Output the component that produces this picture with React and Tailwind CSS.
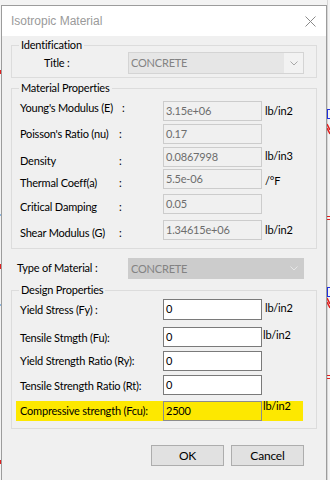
import React from 'react';

const font = "font-[family-name:Lato,'Liberation_Sans',sans-serif]";

const Chevron = ({ color }) => (
  <svg width="8" height="5" viewBox="0 0 8 5" className="block">
    <path d="M0.5 0.5 L4 4 L7.5 0.5" fill="none" stroke={color} strokeWidth="1" />
  </svg>
);

// disabled property rows of the "Material Properties" group
const materialRows = [
  { label: "Young's Modulus (E)", value: '3.15e+06', unit: 'lb/in2', row: 'mt-[6px]', lab: '-mt-[3px]', colon: 'pl-[3px]', u: '' },
  { label: "Poisson's Ratio (nu)", value: '0.17', unit: '', row: 'mt-[3px]', lab: '', colon: '', u: '' },
  { label: 'Density', value: '0.0867998', unit: 'lb/in3', row: 'mt-[3px]', lab: 'mt-[4px]', colon: '', u: '-mt-[1px]' },
  { label: 'Thermal Coeff(a)', value: '5.5e-06', unit: '/°F', row: 'mt-[2px]', lab: 'mt-[4px]', colon: '', u: 'mt-[2px]' },
  { label: 'Critical Damping', value: '0.05', unit: '', row: 'mt-[5px]', lab: 'mt-[3px]', colon: '', u: '' },
  { label: 'Shear Modulus (G)', value: '1.34615e+06', unit: 'lb/in2', row: 'mt-[6px]', lab: 'mt-[3px]', colon: '', u: '' },
];

const designRows = [
  { label: 'Yield Stress (Fy) :', value: '0', unit: 'lb/in2', row: 'mt-[2px] h-[21px]', lab: 'mt-[1px]', u: '-mt-[1px] ml-[3px]' },
  { label: 'Tensile Stmgth (Fu):', value: '0', unit: 'lb/in2', row: 'mt-[7px] h-[20px]', lab: 'mt-[1px]', u: '-mt-[2px] ml-[1px]' },
  { label: 'Yield Strength Ratio (Ry):', value: '0', unit: '', row: 'mt-[4px] h-[20px]', lab: '', u: '' },
  { label: 'Tensile Strength Ratio (Rt):', value: '0', unit: '', row: 'mt-[4px] h-[20px]', lab: 'mt-[1px]', u: '' },
];

const Legend = ({ children }) => (
  <legend className="ml-[7px] px-[2px] leading-[14px] text-black">{children}</legend>
);

export default function App() {
  return (
    <div className={`${font} flex w-[330px] h-[480px] overflow-hidden bg-[#f3f3f3] text-[11px] tracking-[-0.2px] text-black`}>
      {/* left edge of the drawing behind the dialog */}
      <svg width="1" height="480" className="block shrink-0">
        <rect x="0" y="70" width="1" height="4" fill="#e02020" />
        <rect x="0" y="264" width="1" height="5" fill="#e02020" />
        <rect x="0" y="460" width="1" height="4" fill="#e02020" />
        <rect x="0" y="214" width="1" height="2" fill="#8fb8e0" />
        <rect x="0" y="304" width="1" height="2" fill="#8fb8e0" />
      </svg>

      <div className="mt-[5px] flex h-[480px] w-[326px] shrink-0 flex-col border border-[#9c9c9c] bg-[#f0f0f0]">
        {/* title bar */}
        <div className="flex h-[30px] shrink-0 items-center justify-between bg-white pl-[9px] pr-[10px]">
          <span className="text-[12px] tracking-normal text-[#9a9a9a] font-[family-name:'Liberation_Sans',sans-serif]">Isotropic Material</span>
          <svg width="11" height="11" viewBox="0 0 11 11" className="block">
            <path d="M0.5 0.5 L10.5 10.5 M10.5 0.5 L0.5 10.5" stroke="#8a8a8a" strokeWidth="1" />
          </svg>
        </div>

        {/* Identification */}
        <fieldset className="mx-[9px] mt-[2px] border border-[#dcdcdc] pb-[3px]">
          <Legend>Identification</Legend>
          <div className="flex h-[22px] items-center">
            <span className="ml-[32px] w-[84px]">Title :</span>
            <div className="flex h-[22px] w-[176px] border border-[#d4d4d4] bg-[#e6e6e6]">
              <span className="flex-1 pl-[2px] leading-[20px] text-[#838383]">CONCRETE</span>
              <div className="flex w-[19px] items-center justify-center bg-[#f2f2f2]">
                <Chevron color="#a8a8a8" />
              </div>
            </div>
          </div>
        </fieldset>

        {/* Material Properties */}
        <fieldset className="mx-[9px] mt-[3px] border border-[#dcdcdc] pb-[8px]">
          <Legend>Material Properties</Legend>
          {materialRows.map((r) => (
            <div key={r.label} className={`flex h-[20px] items-start ${r.row}`}>
              <span className={`ml-[8px] w-[99px] shrink-0 whitespace-nowrap leading-[20px] ${r.lab}`}>{r.label}</span>
              <span className={`w-[44px] shrink-0 leading-[20px] ${r.lab} ${r.colon}`}>:</span>
              <div className="h-[20px] w-[99px] shrink-0 border border-[#cccccc] bg-[#f0f0f0] pl-[2px] leading-[18px] text-[#6d6d6d]">
                {r.value}
              </div>
              <span className={`ml-[3px] leading-[20px] ${r.u}`}>{r.unit}</span>
            </div>
          ))}
        </fieldset>

        {/* Type of Material */}
        <div className="mt-[9px] flex h-[21px] items-center">
          <span className="ml-[15px] w-[111px] shrink-0">Type of Material :</span>
          <div className="flex h-[21px] w-[176px] border border-[#cccccc] bg-[#cccccc]">
            <span className="flex-1 pl-[2px] leading-[19px] text-[#838383]">CONCRETE</span>
            <div className="flex w-[19px] items-center justify-center">
              <Chevron color="#e6e6e6" />
            </div>
          </div>
        </div>

        {/* Design Properties */}
        <fieldset className="mx-[9px] mt-[4px] border border-[#dcdcdc] pb-[7px]">
          <Legend>Design Properties</Legend>
          {designRows.map((r) => (
            <div key={r.label} className={`flex items-start ${r.row}`}>
              <span className={`ml-[8px] w-[143px] shrink-0 whitespace-nowrap leading-[20px] ${r.lab}`}>{r.label}</span>
              <div className="h-full w-[99px] shrink-0 border border-[#7a7a7a] bg-white pl-[2px] leading-[18px] text-black">
                {r.value}
              </div>
              <span className={`leading-[20px] ${r.u}`}>{r.unit}</span>
            </div>
          ))}
          <div className="mt-[6px] ml-[4px] flex h-[20px] w-[287px] items-start bg-[#fde800]">
            <span className="ml-[4px] w-[143px] shrink-0 whitespace-nowrap leading-[20px]">Compressive strength (Fcu):</span>
            <div className="h-[20px] w-[99px] shrink-0 border border-[#8c8c8c] bg-[#fde800] pl-[2px] leading-[18px] text-black">
              2500
            </div>
            <span className="-mt-[5px] ml-[1px] leading-[20px]">lb/in2</span>
          </div>
        </fieldset>

        {/* buttons */}
        <div className="mt-[16px] flex justify-end gap-[7px] pr-[22px]">
          <button className="h-[21px] w-[73px] border border-[#adadad] bg-[#e1e1e1] text-[12px] text-black">OK</button>
          <button className="h-[21px] w-[73px] border border-[#adadad] bg-[#e1e1e1] text-[12px] text-black">Cancel</button>
        </div>
      </div>

      {/* right edge of the drawing behind the dialog */}
      <svg width="3" height="480" className="block shrink-0">
        <rect x="0" y="0" width="1" height="480" fill="#d6d6d6" />
        <rect x="1" y="0" width="2" height="480" fill="#f4f4f4" />
        <rect x="0.5" y="109.5" width="3" height="9" fill="none" stroke="#2030e0" strokeWidth="1" />
        <path d="M0 124 L3 130 M0 128 L3 134" stroke="#e02020" strokeWidth="1.5" />
        <rect x="0" y="216" width="3" height="1" fill="#e02020" />
        <rect x="0" y="219" width="3" height="1" fill="#e02020" />
        <rect x="0.5" y="287.5" width="3" height="9" fill="none" stroke="#2030e0" strokeWidth="1" />
        <path d="M0 298 L3 304 M0 302 L3 308" stroke="#e02020" strokeWidth="1.5" />
        <rect x="0" y="375" width="3" height="1" fill="#e02020" />
        <rect x="0" y="378" width="3" height="1" fill="#e02020" />
      </svg>
    </div>
  );
}
